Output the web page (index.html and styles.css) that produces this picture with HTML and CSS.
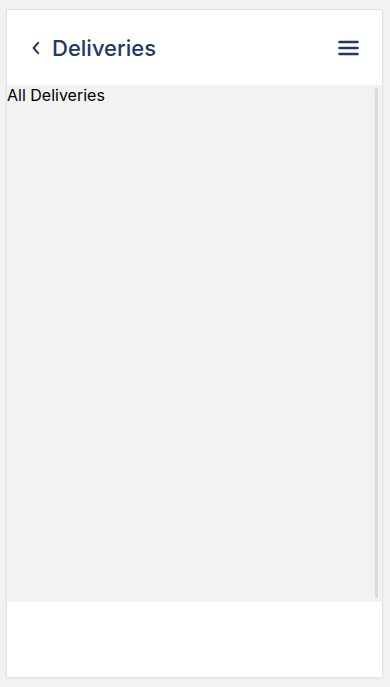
FILE: index.html
```html
<!DOCTYPE html>
<html lang="en">
<head>
<meta charset="utf-8">
<title>Deliveries</title>
<link rel="stylesheet" href="styles.css">
</head>
<body>
<div class="card">
  <header class="header">
    <div class="title-group">
      <svg class="back" width="10" height="14" viewBox="0 0 10 14" aria-hidden="true"><path d="M7.2 1.8 L2.6 7 L7.2 12.2" fill="none" stroke="#1f3a66" stroke-width="2" stroke-linecap="round" stroke-linejoin="round"/></svg>
      <h1 class="title">Deliveries</h1>
    </div>
    <svg class="menu" width="21" height="16" viewBox="0 0 21 16" aria-hidden="true"><g stroke="#1f3a66" stroke-width="2.6" stroke-linecap="round"><line x1="1.5" y1="2" x2="19.5" y2="2"/><line x1="1.5" y1="8" x2="19.5" y2="8"/><line x1="1.5" y1="14" x2="19.5" y2="14"/></g></svg>
  </header>
  <main class="content">
    <div class="section-label">All Deliveries</div>
    <div class="scrollbar"></div>
  </main>
  <footer class="footer"></footer>
</div>
</body>
</html>
```
FILE: styles.css
```css
html, body {
  margin: 0;
  padding: 0;
}
body {
  background: #f2f2f2;
  padding: 10px 8px 10px 7px;
  font-family: Inter, "Noto Sans", sans-serif;
}
.card {
  width: 375px;
  height: 667px;
  background: #fff;
  box-shadow: 0 0 0 1px #e2e2e2, 0 1px 3px rgba(0,0,0,0.08);
  display: flex;
  flex-direction: column;
}
.header {
  height: 75px;
  flex: none;
  display: flex;
  align-items: center;
  justify-content: space-between;
  padding: 0 23px 0 24px;
}
.title-group {
  display: flex;
  align-items: center;
  gap: 11px;
}
.back {
  display: block;
}
.title {
  margin: 0;
  font-size: 22px;
  font-weight: 450;
  color: #1f3a66;
  line-height: 1;
}
.menu {
  display: block;
}
.content {
  flex: 1;
  background: #f2f2f2;
  position: relative;
}
.section-label {
  font-size: 16px;
  color: #000;
  line-height: 20px;
}
.scrollbar {
  position: absolute;
  right: 4px;
  top: 3px;
  bottom: 4px;
  width: 3px;
  border-radius: 2px;
  background: #dadada;
}
.footer {
  height: 75px;
  flex: none;
  background: #fff;
}
```
